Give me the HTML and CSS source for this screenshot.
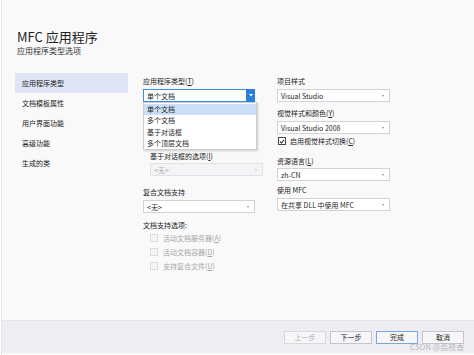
FILE: index.html
```html
<!DOCTYPE html>
<html lang="zh-CN">
<head>
<meta charset="utf-8">
<title>MFC 应用程序</title>
<link rel="stylesheet" href="styles.css">
</head>
<body>
<div class="dialog">
  <header class="head">
    <h1 class="title">MFC 应用程序</h1>
    <p class="subtitle">应用程序类型选项</p>
  </header>
  <main class="body">
    <nav class="nav">
      <div class="nav-item active">应用程序类型</div>
      <div class="nav-item">文档模板属性</div>
      <div class="nav-item">用户界面功能</div>
      <div class="nav-item">高级功能</div>
      <div class="nav-item">生成的类</div>
    </nav>

    <section class="col col-mid">
      <div class="lbl">应用程序类型(<u>T</u>)</div>
      <div class="combo-wrap">
        <div class="combo combo-open">
          <span>单个文档</span>
          <span class="drop-btn"><svg width="4" height="3" viewBox="0 0 4 3"><path d="M0 0H4L2 2.5Z" fill="#fff"/></svg></span>
        </div>
        <ul class="droplist">
          <li class="drop-item hl">单个文档</li>
          <li class="drop-item">多个文档</li>
          <li class="drop-item">基于对话框</li>
          <li class="drop-item">多个顶层文档</li>
        </ul>
      </div>

      <div class="sub">
        <div class="lbl lbl-sub">基于对话框的选项(<u>I</u>)</div>
        <div class="combo disabled"><span>&lt;无&gt;</span><span class="arrow"></span></div>
      </div>

      <div class="lbl lbl-compound">复合文档支持</div>
      <div class="combo"><span>&lt;无&gt;</span><span class="arrow"></span></div>

      <div class="lbl lbl-docopt">文档支持选项:</div>
      <div class="checks">
        <div class="check dis"><span class="box"></span><span>活动文档服务器(<u>A</u>)</span></div>
        <div class="check dis"><span class="box"></span><span>活动文档容器(<u>D</u>)</span></div>
        <div class="check dis"><span class="box"></span><span>支持复合文件(<u>U</u>)</span></div>
      </div>
    </section>

    <section class="col col-right">
      <div class="lbl">项目样式</div>
      <div class="combo"><span>Visual Studio</span><span class="arrow"></span></div>

      <div class="lbl lbl-gap">视觉样式和颜色(<u>Y</u>)</div>
      <div class="combo"><span>Visual Studio 2008</span><span class="arrow"></span></div>

      <div class="check check-on">
        <span class="box"><svg width="7" height="7" viewBox="0 0 7 7"><path d="M1.2 3.6L2.8 5.3L5.9 1.4" fill="none" stroke="#1a1a1a" stroke-width="1.2"/></svg></span>
        <span>启用视觉样式切换(<u>C</u>)</span>
      </div>

      <div class="lbl lbl-lang">资源语言(<u>L</u>)</div>
      <div class="combo"><span>zh-CN</span><span class="arrow"></span></div>

      <div class="lbl lbl-mfc">使用 MFC</div>
      <div class="combo"><span>在共享 DLL 中使用 MFC</span><span class="arrow"></span></div>
    </section>
  </main>
  <footer class="foot">
    <button class="btn btn-dis">上一步</button>
    <button class="btn">下一步</button>
    <button class="btn btn-default">完成</button>
    <button class="btn">取消</button>
  </footer>
  <div class="watermark">CSDN @荔枝香</div>
</div>
</body>
</html>
```

FILE: styles.css
```css
* { box-sizing: border-box; }

html, body {
  margin: 0;
  padding: 0;
  background: #ffffff;
}

body {
  font-family: "Noto Sans CJK SC", "Noto Sans", sans-serif;
  color: #1e1e1e;
}

.dialog {
  position: relative;
  width: 474px;
  height: 355px;
  display: flex;
  flex-direction: column;
  background: #f9f9fa;
  border-left: 1px solid #e6e6ea;
  margin-left: 1px;
}

.head {
  height: 73px;
  padding: 29px 0 0 15px;
}

.title {
  margin: 0;
  font-size: 13px;
  line-height: 16px;
  font-weight: 400;
  color: #1e1e1e;
}

.subtitle {
  margin: 1px 0 0;
  font-size: 8px;
  line-height: 10px;
  color: #333;
}

.body {
  flex: 1;
  display: flex;
  align-items: flex-start;
}

.nav {
  margin-left: 13px;
  width: 113px;
  display: flex;
  flex-direction: column;
}

.nav-item {
  height: 20px;
  line-height: 20px;
  padding-left: 7px;
  font-size: 7px;
  color: #222;
}

.nav-item.active {
  background: #dfe4f7;
}

.col {
  display: flex;
  flex-direction: column;
  padding-top: 3px;
}

.col-mid {
  margin-left: 15px;
  width: 112px;
}

.col-right {
  margin-left: 22px;
  width: 113px;
}

.lbl {
  font-size: 7px;
  line-height: 10px;
  color: #222;
  margin-bottom: 3px;
}

.lbl u { text-decoration: underline; }

.lbl-gap { margin-top: 6px; }
.lbl-lang { margin-top: 9px; margin-bottom: 2px; }
.lbl-mfc { margin-top: 4px; }
.lbl-compound { margin-top: 11px; }
.lbl-docopt { margin-top: 7px; margin-bottom: 1px; }

.combo {
  position: relative;
  height: 13px;
  background: #ffffff;
  border: 1px solid #d2d2d8;
  display: flex;
  align-items: center;
  padding-left: 3px;
  font-size: 7px;
  line-height: 10px;
  color: #1e1e1e;
}

.combo .arrow {
  position: absolute;
  right: 5px;
  top: 5px;
  width: 0;
  height: 0;
  border-left: 1.5px solid transparent;
  border-right: 1.5px solid transparent;
  border-top: 2px solid #8a8a8a;
}

.combo.disabled {
  background: #f4f4f6;
  border-color: #e2e2e6;
  color: #a8a8a8;
}

.combo.disabled .arrow { border-top-color: #c0c0c0; }

.combo-wrap { position: relative; }

.combo-open {
  border-color: #3c8de0;
}

.drop-btn {
  position: absolute;
  right: -1px;
  top: -1px;
  width: 9px;
  height: 13px;
  background: #2a7fd8;
  display: flex;
  align-items: center;
  justify-content: center;
}

.droplist {
  position: absolute;
  left: 0;
  top: 13px;
  width: 114px;
  height: 48px;
  margin: 0;
  padding: 1px 0 0;
  list-style: none;
  background: #ffffff;
  border: 1px solid #cdcdd2;
  box-shadow: 1px 1px 2px rgba(0,0,0,0.18);
  z-index: 2;
}

.drop-item {
  height: 11.4px;
  line-height: 11.4px;
  padding-left: 3px;
  font-size: 7px;
  color: #1e1e1e;
}

.drop-item.hl { background: #cbdff6; }

.sub {
  margin-top: 49px;
  padding-left: 7px;
  width: 120px;
  display: flex;
  flex-direction: column;
}

.lbl-sub { margin-bottom: 2px; }

.checks {
  display: flex;
  flex-direction: column;
  padding-left: 7px;
}

.check {
  display: flex;
  align-items: center;
  gap: 5px;
  height: 14px;
  font-size: 7px;
  color: #222;
}

.check .box {
  width: 8px;
  height: 8px;
  background: #fff;
  border: 1px solid #555;
  display: flex;
  align-items: center;
  justify-content: center;
}

.check.dis { color: #a6a6a6; }
.check.dis .box {
  background: #f4f4f6;
  border-color: #dcdcdf;
}

.check-on {
  margin-top: 1px;
  height: 12px;
  padding-left: 1px;
  gap: 4px;
}

.check-on .box { border-color: #444; }

.foot {
  height: 33px;
  margin-bottom: 2px;
  background: #eeeef2;
  border-top: 1px solid #e4e4ea;
  display: flex;
  align-items: center;
  justify-content: flex-end;
  gap: 4px;
  padding-right: 11px;
}

.btn {
  width: 42px;
  height: 13px;
  padding: 0;
  margin: 0;
  font-family: "Noto Sans CJK SC", sans-serif;
  font-size: 7px;
  line-height: 11px;
  color: #1e1e1e;
  background: #f6f6f8;
  border: 1px solid #c4c4cc;
}

.btn-dis {
  color: #b0b0b0;
  border-color: #d8d8de;
}

.btn-default {
  border-color: #7aa6e2;
}

.watermark {
  position: absolute;
  left: 408px;
  top: 343px;
  font-size: 8px;
  line-height: 8px;
  color: #b8b8bc;
  white-space: nowrap;
}
```
